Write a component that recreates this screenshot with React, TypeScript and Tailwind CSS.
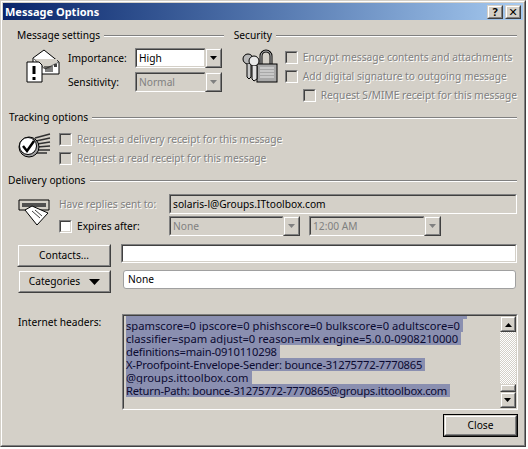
import type { ReactNode } from "react";

const uiFont = "font-['Noto_Sans','DejaVu_Sans',sans-serif] text-[10.2px] leading-[13px]";

function Sunken({ className, children }: { className: string; children?: ReactNode }) {
	return (
		<div
			className={`border border-t-[#808080] border-l-[#808080] border-r-white border-b-white ${className}`}
		>
			<div className="h-full w-full border border-t-[#404040] border-l-[#404040] border-r-[#d4d0c8] border-b-[#d4d0c8] flex items-center px-[2px]">
				{children}
			</div>
		</div>
	);
}

function Raised({ className, children }: { className: string; children?: ReactNode }) {
	return (
		<div
			className={`border border-t-[#d4d0c8] border-l-[#d4d0c8] border-r-[#404040] border-b-[#404040] ${className}`}
		>
			<div className="h-full w-full border border-t-white border-l-white border-r-[#808080] border-b-[#808080] flex items-center justify-center bg-[#d4d0c8]">
				{children}
			</div>
		</div>
	);
}

function Arrow({ disabled, up }: { disabled?: boolean; up?: boolean }) {
	return (
		<svg width="8" height="5" viewBox="0 0 8 5" className={up ? "rotate-180" : ""}>
			<path d="M0 0h7L3.5 4z" fill={disabled ? "#808080" : "#000"} />
		</svg>
	);
}

function Select({ value, width, disabled }: { value: string; width: string; disabled?: boolean }) {
	return (
		<div className="flex items-center">
			<Sunken className={`${width} h-[20px] ${disabled ? "bg-[#d4d0c8]" : "bg-white"}`}>
				<span className={disabled ? "text-[#808080]" : "text-black"}>{value}</span>
			</Sunken>
			<Raised className="w-[17px] h-[20px] -ml-[1px]">
				<Arrow disabled={disabled} />
			</Raised>
		</div>
	);
}

function Check({ label, disabled, className }: { label: string; disabled?: boolean; className?: string }) {
	return (
		<div className={`flex items-center h-[13px] ${className ?? ""}`}>
			<div className="w-[13px] h-[13px] border border-t-[#808080] border-l-[#808080] border-r-white border-b-white shrink-0">
				<div
					className={`h-full w-full border border-t-[#404040] border-l-[#404040] border-r-[#d4d0c8] border-b-[#d4d0c8] ${disabled ? "bg-[#d4d0c8]" : "bg-white"}`}
				/>
			</div>
			<span
				className={
					disabled
						? "ml-[5px] whitespace-nowrap text-[#808080] [text-shadow:1px_1px_0_#fff]"
						: "ml-[5px] whitespace-nowrap text-black"
				}
			>
				{label}
			</span>
		</div>
	);
}

function GroupTitle({ title, className }: { title: string; className?: string }) {
	return (
		<div className={`flex items-center ${className ?? ""}`}>
			<span className="whitespace-nowrap mr-[4px]">{title}</span>
			<div className="flex-1 h-[2px] bg-white border-t border-[#808080]" />
		</div>
	);
}

function MessageIcon() {
	return (
		<svg width="34" height="34" viewBox="0 0 34 34" className="shrink-0">
			<path d="M7 9 18 1l15 12v12H7z" fill="#fff" stroke="#000" />
			<path d="M9 10h22v3l-8 7H17L9 13z" fill="#d4d0c8" />
			<path d="M7 9 19 20 33 13" fill="none" stroke="#606060" />
			<path d="M1 13h12l3 3v17H1z" fill="#fff" stroke="#000" />
			<path d="M8 17v8" stroke="#000" strokeWidth="3" />
			<path d="M8 28v3" stroke="#000" strokeWidth="3" />
			<path d="M18 18h9M19 20h8M19 22h8" stroke="#000" />
			<path d="M28 15h3v3h-3z" fill="#404040" />
		</svg>
	);
}

function SecurityIcon() {
	return (
		<svg width="36" height="34" viewBox="0 0 36 34" className="shrink-0">
			<path d="M19 15V7a5 5 0 0 1 10 0v8" fill="none" stroke="#000" strokeWidth="3" />
			<path d="M19 15V7a5 5 0 0 1 10 0v8" fill="none" stroke="#c8c8c8" />
			<rect x="15" y="15" width="20" height="18" fill="#a8a8a8" stroke="#000" />
			<path d="M18 19h14M18 22h14M18 25h14M18 28h14" stroke="#e8e8e8" />
			<circle cx="6" cy="10" r="5" fill="#b8b8b8" stroke="#000" />
			<path d="M5 15v13l2 2 2-2V15" fill="#c8c8c8" stroke="#000" />
			<circle cx="12" cy="12" r="5" fill="#e8e8e8" stroke="#000" />
			<path d="M10 17v13l2 2 3-2V17" fill="#e0e0e0" stroke="#000" />
		</svg>
	);
}

function TrackingIcon() {
	return (
		<svg width="34" height="26" viewBox="0 0 34 26" className="shrink-0">
			<path d="M18 6 33 2M19 9 33 6M20 12 33 10M20 15 33 14M19 18 33 18M18 21 30 21" stroke="#303030" strokeWidth="1.5" />
			<ellipse cx="12" cy="15" rx="10" ry="10" fill="#a0a0a0" stroke="#000" />
			<ellipse cx="11" cy="14" rx="8.5" ry="8.5" fill="#fff" stroke="#000" />
			<path d="M6 14l4 5 7-10" fill="none" stroke="#000" strokeWidth="2.5" />
		</svg>
	);
}

function DeliveryIcon() {
	return (
		<svg width="34" height="28" viewBox="0 0 34 28" className="shrink-0">
			<path d="M2 2h30v10H2z" fill="#d4d0c8" stroke="#000" />
			<path d="M5 5h24v4H5z" fill="#505050" />
			<path d="M8 12 15 8 31 15 20 27z" fill="#fff" stroke="#000" />
			<path d="M15 13l8 7M18 12l7 6" stroke="#404040" />
		</svg>
	);
}

export default function App() {
	return (
		<div className={`w-[526px] h-[447px] bg-[#d4d0c8] text-black ${uiFont} border border-t-[#d4d0c8] border-l-[#d4d0c8] border-r-[#404040] border-b-[#404040]`}>
			<div className="h-full w-full border border-t-white border-l-white border-r-[#808080] border-b-[#808080] pt-[1px] px-[1px]">
				{/* Title bar */}
				<div className="h-[17px] bg-gradient-to-r from-[#0a246a] to-[#a6caf0] flex items-center justify-between pl-[2px] pr-[2px]">
					<span className="text-white font-bold text-[11px]">Message Options</span>
					<div className="flex gap-[2px]">
						<Raised className="w-[16px] h-[14px]">
							<span className="font-bold text-[11px] leading-none">?</span>
						</Raised>
						<Raised className="w-[16px] h-[14px]">
							<span className="font-bold text-[11px] leading-none">✕</span>
						</Raised>
					</div>
				</div>

				{/* Settings + security */}
				<div className="flex mt-[9px] pl-[14px] pr-[6px]">
					<div className="w-[207px]">
						<GroupTitle title="Message settings" />
						<div className="flex mt-[6px] pl-[9px]">
							<div className="mt-[1px]">
								<MessageIcon />
							</div>
							<div className="ml-[8px] flex flex-col gap-[4px]">
								<div className="flex items-center">
									<span className="w-[67px]">Importance:</span>
									<Select value="High" width="w-[71px]" />
								</div>
								<div className="flex items-center">
									<span className="w-[67px]">Sensitivity:</span>
									<Select value="Normal" width="w-[71px]" disabled />
								</div>
							</div>
						</div>
					</div>
					<div className="ml-[10px] flex-1">
						<GroupTitle title="Security" />
						<div className="flex mt-[7px] pl-[8px]">
							<SecurityIcon />
							<div className="ml-[7px] flex flex-col gap-[6px] pt-[2px]">
								<Check label="Encrypt message contents and attachments" disabled />
								<Check label="Add digital signature to outgoing message" disabled />
								<Check label="Request S/MIME receipt for this message" disabled className="ml-[18px]" />
							</div>
						</div>
					</div>
				</div>

				{/* Tracking */}
				<div className="mt-[9px] pl-[6px] pr-[6px]">
					<GroupTitle title="Tracking options" />
					<div className="flex mt-[8px] pl-[8px]">
						<TrackingIcon />
						<div className="ml-[8px] flex flex-col gap-[6px] pt-[1px]">
							<Check label="Request a delivery receipt for this message" disabled />
							<Check label="Request a read receipt for this message" disabled />
						</div>
					</div>
				</div>

				{/* Delivery */}
				<div className="mt-[9px] pl-[5px] pr-[6px]">
					<GroupTitle title="Delivery options" />
					<div className="flex mt-[7px] pl-[9px]">
						<div className="mt-[4px]">
							<DeliveryIcon />
						</div>
						<div className="ml-[8px] flex-1">
							<div className="flex items-center">
								<span className="w-[110px] text-[#808080] [text-shadow:1px_1px_0_#fff]">Have replies sent to:</span>
								<Sunken className="flex-1 h-[20px]">solaris-l@Groups.ITtoolbox.com</Sunken>
							</div>
							<div className="flex items-center mt-[2px]">
								<div className="w-[110px]">
									<Check label="Expires after:" />
								</div>
								<Select value="None" width="w-[115px]" disabled />
								<div className="ml-[9px]">
									<Select value="12:00 AM" width="w-[116px]" disabled />
								</div>
							</div>
						</div>
					</div>
				</div>

				{/* Contacts + categories */}
				<div className="mt-[8px] pl-[14px] pr-[6px] flex items-start">
					<Raised className="w-[94px] h-[23px]">Contacts...</Raised>
					<Sunken className="ml-[10px] flex-1 h-[19px] bg-white" />
				</div>
				<div className="mt-[3px] pl-[15px] pr-[7px] flex items-start">
					<Raised className="w-[93px] h-[23px]">
						<span className="mr-[9px]">Categories</span>
						<svg width="11" height="6" viewBox="0 0 11 6">
							<path d="M0 0h11L5.5 6z" fill="#000" />
						</svg>
					</Raised>
					<div className="ml-[12px] flex-1 h-[19px] bg-white border border-[#a0a0a0] rounded-[3px] flex items-center px-[4px]">
						None
					</div>
				</div>

				{/* Internet headers */}
				<div className="mt-[21px] pl-[15px] pr-[5px] flex items-start">
					<span className="w-[104px] pt-[2px]">Internet headers:</span>
					<div className="flex-1 h-[96px] border border-t-[#808080] border-l-[#808080] border-r-white border-b-white">
						<div className="h-full w-full border border-t-[#404040] border-l-[#404040] border-r-[#d4d0c8] border-b-[#d4d0c8] flex overflow-hidden">
							<div className="flex-1 pl-[2px] font-['Noto_Sans','DejaVu_Sans',sans-serif] text-[11.2px] leading-[13px] text-[#0a0a30] overflow-hidden whitespace-nowrap">
								<div className="h-[3px] w-[341px] bg-[#8a8fb0]" />
								<div className="h-[13px]"><span className="bg-[#8a8fb0] pr-[3px] inline-block h-[13px]">spamscore=0 ipscore=0 phishscore=0 bulkscore=0 adultscore=0</span></div>
								<div className="h-[13px]"><span className="bg-[#8a8fb0] pr-[3px] inline-block h-[13px]">classifier=spam adjust=0 reason=mlx engine=5.0.0-0908210000</span></div>
								<div className="h-[13px]"><span className="bg-[#8a8fb0] pr-[3px] inline-block h-[13px] tracking-[-0.2px]">definitions=main-0910110298</span></div>
								<div className="h-[13px]"><span className="bg-[#8a8fb0] pr-[3px] inline-block h-[13px] tracking-[-0.2px]">X-Proofpoint-Envelope-Sender: bounce-31275772-7770865</span></div>
								<div className="h-[13px]"><span className="bg-[#8a8fb0] pr-[3px] inline-block h-[13px]">@groups.ittoolbox.com</span></div>
								<div className="h-[13px]"><span className="bg-[#8a8fb0] pr-[3px] inline-block h-[13px] tracking-[-0.23px]">Return-Path: bounce-31275772-7770865@groups.ittoolbox.com</span></div>
							</div>
							<div className="w-[16px] flex flex-col bg-[conic-gradient(#d4d0c8_25%,#fff_0_50%,#d4d0c8_0_75%,#fff_0)] bg-[length:2px_2px] shrink-0">
								<Raised className="w-[16px] h-[16px] shrink-0">
									<Arrow up />
								</Raised>
								<div className="flex-1" />
								<Raised className="w-[16px] h-[8px] shrink-0" />
								<Raised className="w-[16px] h-[16px] shrink-0">
									<Arrow />
								</Raised>
							</div>
						</div>
					</div>
				</div>

				{/* Footer */}
				<div className="mt-[4px] pr-[5px] flex justify-end">
					<div className="border border-black">
						<Raised className="w-[73px] h-[21px]">Close</Raised>
					</div>
				</div>
			</div>
		</div>
	);
}
